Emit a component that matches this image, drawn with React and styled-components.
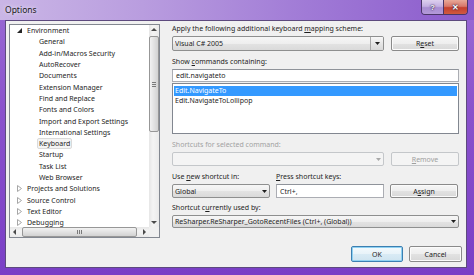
import React from "react";
import styled, { createGlobalStyle, css } from "styled-components";

const GlobalStyle = createGlobalStyle`
  html, body { margin: 0; padding: 0; background: #fff; }
  body {
    font-family: "Noto Sans", "Liberation Sans", sans-serif;
    font-size: 7px;
    color: #1e1e1e;
  }
`;

const Frame = styled.div`
  width: 474px;
  height: 275px;
  display: flex;
  flex-direction: column;
  background: linear-gradient(180deg, #9a6bd4 0%, #8a52cc 40%, #7a3fc6 100%);
`;

const TitleBar = styled.div`
  height: 20px;
  display: flex;
  align-items: flex-start;
  padding-right: 6px;
  background: linear-gradient(90deg, #cab6e6 0%, #b99ddf 30%, #a07ad6 65%, #8b5bcc 100%);
`;

const Title = styled.div`
  font-size: 8.5px;
  line-height: 19px;
  padding-left: 5px;
  color: #1a1a1a;
  text-shadow: 0 0 4px rgba(255, 255, 255, 0.9);
`;

const Caption = styled.div`
  margin-left: auto;
  display: flex;
  height: 14px;
  border: 1px solid #4a3668;
  border-top: none;
  border-radius: 0 0 4px 4px;
  overflow: hidden;
`;

const CaptionButton = styled.div`
  width: ${(p) => p.$w}px;
  display: flex;
  align-items: center;
  justify-content: center;
  color: #fff;
  font-family: "Liberation Sans", sans-serif;
  font-weight: bold;
  font-size: 8px;
  text-shadow: 0 0 2px #2a1a40, 0 0 1px #2a1a40;
  background: ${(p) =>
    p.$close
      ? "linear-gradient(180deg, #e8a898 0%, #d8786a 45%, #c5402e 55%, #d05a40 100%)"
      : "linear-gradient(180deg, #ddd0ee 0%, #c4b0e2 45%, #a88dd2 55%, #b49ad8 100%)"};
  & + & { border-left: 1px solid #4a3668; }
`;

const Client = styled.div`
  flex: 1;
  margin: 0 7px 7px 5px;
  background: #f0f0f0;
  border: 1px solid #5d4a7e;
  padding: 3px 4px 0 3px;
  display: flex;
  flex-direction: column;
`;

const Main = styled.div`
  display: flex;
`;

/* ---------- tree ---------- */

const Tree = styled.div`
  width: 151px;
  height: 214px;
  box-sizing: border-box;
  border: 1px solid #828790;
  background: #fff;
  display: grid;
  grid-template-columns: 1fr 10px;
  grid-template-rows: 1fr 10px;
  overflow: hidden;
`;

const TreeItems = styled.div`
  overflow: hidden;
  padding-left: 4px;
`;

const TreeRow = styled.div`
  height: 11.3px;
  line-height: 11.3px;
  display: flex;
  align-items: center;
  padding-left: ${(p) => p.$level * 12}px;
  white-space: nowrap;
`;

const Expander = styled.span`
  width: 12px;
  height: 11px;
  display: flex;
  align-items: center;
  padding-left: 3px;
  box-sizing: border-box;
`;

const TreeText = styled.span`
  padding: 0 1px;
  margin-left: -1px;
  line-height: 9px;
  border: 1px solid transparent;
  ${(p) =>
    p.$selected &&
    css`
      background: #f4f4f4;
      border-color: #dadada;
      border-radius: 2px;
    `}
`;

const ScrollV = styled.div`
  background: linear-gradient(90deg, #e6e6e6, #f4f4f4 40%, #eaeaea);
  display: flex;
  flex-direction: column;
`;

const ScrollH = styled.div`
  background: linear-gradient(180deg, #e6e6e6, #f4f4f4 40%, #eaeaea);
  display: flex;
  align-items: stretch;
`;

const Corner = styled.div`
  background: #f0f0f0;
`;

const ArrowBox = styled.div`
  width: 10px;
  height: 10px;
  display: flex;
  align-items: center;
  justify-content: center;
  flex-shrink: 0;
`;

const Thumb = styled.div`
  box-sizing: border-box;
  border: 1px solid #979797;
  border-radius: 2px;
  display: flex;
  align-items: center;
  justify-content: center;
  ${(p) =>
    p.$vertical
      ? css`
          margin: 1px 0 0;
          height: 96px;
          background: linear-gradient(90deg, #f2f2f2, #e2e2e2 50%, #d2d2d2);
        `
      : css`
          margin: 0 0 0 2px;
          width: 115px;
          background: linear-gradient(180deg, #f2f2f2, #e2e2e2 50%, #d2d2d2);
        `}
`;

const Grip = styled.div`
  display: flex;
  flex-direction: ${(p) => (p.$vertical ? "column" : "row")};
  gap: 1px;
  & > i {
    display: block;
    background: #7a7a7a;
    width: ${(p) => (p.$vertical ? "4px" : "1px")};
    height: ${(p) => (p.$vertical ? "1px" : "4px")};
  }
`;

const Spacer = styled.div`
  flex: 1;
`;

function Tri({ dir }) {
  const pts = {
    up: "1,5 4,2 7,5",
    down: "1,3 4,6 7,3",
    left: "5,1 2,4 5,7",
    right: "3,1 6,4 3,7",
  }[dir];
  return (
    <svg width="8" height="8" viewBox="0 0 8 8">
      <polygon points={pts} fill="#4a4a4a" />
    </svg>
  );
}

const treeData = [
  { text: "Environment", level: 0, exp: "open" },
  { text: "General", level: 1 },
  { text: "Add-in/Macros Security", level: 1 },
  { text: "AutoRecover", level: 1 },
  { text: "Documents", level: 1 },
  { text: "Extension Manager", level: 1 },
  { text: "Find and Replace", level: 1 },
  { text: "Fonts and Colors", level: 1 },
  { text: "Import and Export Settings", level: 1 },
  { text: "International Settings", level: 1 },
  { text: "Keyboard", level: 1, selected: true },
  { text: "Startup", level: 1 },
  { text: "Task List", level: 1 },
  { text: "Web Browser", level: 1 },
  { text: "Projects and Solutions", level: 0, exp: "closed" },
  { text: "Source Control", level: 0, exp: "closed" },
  { text: "Text Editor", level: 0, exp: "closed" },
  { text: "Debugging", level: 0, exp: "closed" },
];

function ExpandGlyph({ kind }) {
  if (kind === "open")
    return (
      <svg width="5" height="5" viewBox="0 0 5 5">
        <polygon points="5,0 5,5 0,5" fill="#262626" />
      </svg>
    );
  if (kind === "closed")
    return (
      <svg width="5" height="7" viewBox="0 0 5 7">
        <polygon points="0.5,0.5 4.5,3.5 0.5,6.5" fill="none" stroke="#a6a6a6" strokeWidth="1" />
      </svg>
    );
  return null;
}

/* ---------- right side ---------- */

const Right = styled.div`
  margin-left: 12px;
  width: 287px;
  display: flex;
  flex-direction: column;
`;

const Label = styled.div`
  height: 10px;
  line-height: 10px;
  margin-top: ${(p) => p.$mt || 0}px;
  margin-bottom: 2px;
  white-space: nowrap;
  color: ${(p) => (p.$disabled ? "#a2a2a2" : "#1e1e1e")};
`;

const Row = styled.div`
  display: flex;
  gap: ${(p) => p.$gap || 7}px;
  align-items: flex-start;
`;

const Col = styled.div`
  display: flex;
  flex-direction: column;
  width: ${(p) => p.$w}px;
`;

const Combo = styled.div`
  box-sizing: border-box;
  width: ${(p) => p.$w}px;
  height: ${(p) => p.$h || 14}px;
  border: 1px solid ${(p) => (p.$disabled ? "#c4c7ca" : "#8e8f8f")};
  border-radius: 2px;
  display: flex;
  align-items: center;
  padding-left: 2px;
  background: ${(p) =>
    p.$disabled
      ? "#f4f4f4"
      : "linear-gradient(180deg, #f6f6f6 0%, #eeeeee 50%, #e3e3e3 51%, #dadada 100%)"};
  white-space: nowrap;
  overflow: hidden;
`;

const ComboText = styled.span`
  flex: 1;
  overflow: hidden;
`;

const ComboArrow = styled.span`
  width: ${(p) => (p.$split ? 12 : 10)}px;
  align-self: stretch;
  display: flex;
  align-items: center;
  justify-content: center;
  ${(p) =>
    p.$split &&
    css`
      border-left: 1px solid #a8a8a8;
      background: linear-gradient(180deg, #f8f8f8, #e6e6e6 50%, #d8d8d8);
    `}
`;

function Arrow({ color = "#1e1e1e" }) {
  return (
    <svg width="5" height="3" viewBox="0 0 5 3">
      <polygon points="0,0 5,0 2.5,3" fill={color} />
    </svg>
  );
}

const TextBox = styled.div`
  box-sizing: border-box;
  width: ${(p) => p.$w}px;
  height: ${(p) => p.$h || 14}px;
  border: 1px solid #abadb3;
  border-top-color: #8f939a;
  background: #fff;
  padding-left: 3px;
  display: flex;
  align-items: center;
`;

const ListBox = styled.div`
  box-sizing: border-box;
  margin-top: 1px;
  height: 51px;
  border: 1px solid #828790;
  background: #fff;
  padding: 2px 1px;
`;

const ListItem = styled.div`
  height: 10px;
  line-height: 10px;
  padding-left: 1px;
  ${(p) =>
    p.$selected &&
    css`
      background: #3399ff;
      color: #fff;
    `}
`;

const Button = styled.div`
  box-sizing: border-box;
  width: ${(p) => p.$w}px;
  height: ${(p) => p.$h || 15}px;
  border: 1px solid ${(p) => (p.$disabled ? "#c4c7ca" : p.$default ? "#3c7fb1" : "#8a8a8a")};
  border-radius: 2px;
  display: flex;
  align-items: center;
  justify-content: center;
  color: ${(p) => (p.$disabled ? "#a0a0a0" : "#1e1e1e")};
  background: ${(p) =>
    p.$disabled
      ? "#f4f4f4"
      : p.$default
      ? "linear-gradient(180deg, #f4fafd 0%, #e8f3f9 50%, #d9ebf5 51%, #cfe4f0 100%)"
      : "linear-gradient(180deg, #f6f6f6 0%, #eeeeee 50%, #e2e2e2 51%, #d8d8d8 100%)"};
  box-shadow: ${(p) =>
    p.$default ? "inset 0 0 0 1px #8fd1f2" : p.$disabled ? "none" : "inset 0 0 0 1px #fbfbfb"};
`;

const Footer = styled.div`
  margin-top: 8px;
  display: flex;
  justify-content: flex-end;
  gap: 6px;
`;

export default function App() {
  return (
    <>
      <GlobalStyle />
      <Frame>
        <TitleBar>
          <Title>Options</Title>
          <Caption>
            <CaptionButton $w={21}>?</CaptionButton>
            <CaptionButton $w={23} $close>
              ✕
            </CaptionButton>
          </Caption>
        </TitleBar>
        <Client>
          <Main>
            <Tree>
              <TreeItems>
                {treeData.map((it) => (
                  <TreeRow key={it.text} $level={it.level}>
                    <Expander>
                      <ExpandGlyph kind={it.exp} />
                    </Expander>
                    <TreeText $selected={it.selected}>{it.text}</TreeText>
                  </TreeRow>
                ))}
              </TreeItems>
              <ScrollV>
                <ArrowBox>
                  <Tri dir="up" />
                </ArrowBox>
                <Thumb $vertical>
                  <Grip $vertical>
                    <i />
                    <i />
                    <i />
                  </Grip>
                </Thumb>
                <Spacer />
                <ArrowBox>
                  <Tri dir="down" />
                </ArrowBox>
              </ScrollV>
              <ScrollH>
                <ArrowBox>
                  <Tri dir="left" />
                </ArrowBox>
                <Thumb>
                  <Grip>
                    <i />
                    <i />
                    <i />
                  </Grip>
                </Thumb>
                <Spacer />
                <ArrowBox>
                  <Tri dir="right" />
                </ArrowBox>
              </ScrollH>
              <Corner />
            </Tree>

            <Right>
              <Label>
                Apply the following additional keyboard <u>m</u>apping scheme:
              </Label>
              <Row>
                <Combo $w={212} $h={15}>
                  <ComboText>Visual C# 2005</ComboText>
                  <ComboArrow $split>
                    <Arrow />
                  </ComboArrow>
                </Combo>
                <Button $w={68}>
                  R<u>e</u>set
                </Button>
              </Row>

              <Label $mt={6}>
                Show <u>c</u>ommands containing:
              </Label>
              <TextBox $w={287} $h={13}>
                edit.navigateto
              </TextBox>
              <ListBox>
                <ListItem $selected>Edit.NavigateTo</ListItem>
                <ListItem>Edit.NavigateToLollipop</ListItem>
              </ListBox>

              <Label $mt={6} $disabled>
                Shortcuts for selected command:
              </Label>
              <Row>
                <Combo $w={212} $disabled>
                  <ComboText />
                  <ComboArrow>
                    <Arrow color="#a8a8a8" />
                  </ComboArrow>
                </Combo>
                <Button $w={68} $h={14} $disabled>
                  <u>R</u>emove
                </Button>
              </Row>

              <Row $gap={6}>
                <Col $w={98}>
                  <Label $mt={6}>
                    Use <u>n</u>ew shortcut in:
                  </Label>
                  <Combo $w={98}>
                    <ComboText>Global</ComboText>
                    <ComboArrow>
                      <Arrow />
                    </ComboArrow>
                  </Combo>
                </Col>
                <Col $w={108}>
                  <Label $mt={6}>
                    <u>P</u>ress shortcut keys:
                  </Label>
                  <TextBox $w={108}>Ctrl+,</TextBox>
                </Col>
                <Col $w={68}>
                  <Label $mt={6} />
                  <Button $w={68} $h={14}>
                    A<u>s</u>sign
                  </Button>
                </Col>
              </Row>

              <Label $mt={5}>
                Shortcut c<u>u</u>rrently used by:
              </Label>
              <Combo $w={287} $h={13}>
                <ComboText>ReSharper.ReSharper_GotoRecentFiles (Ctrl+, (Global))</ComboText>
                <ComboArrow>
                  <Arrow />
                </ComboArrow>
              </Combo>
            </Right>
          </Main>
          <Footer>
            <Button $w={52} $h={16} $default>
              OK
            </Button>
            <Button $w={53} $h={16}>
              Cancel
            </Button>
          </Footer>
        </Client>
      </Frame>
    </>
  );
}
